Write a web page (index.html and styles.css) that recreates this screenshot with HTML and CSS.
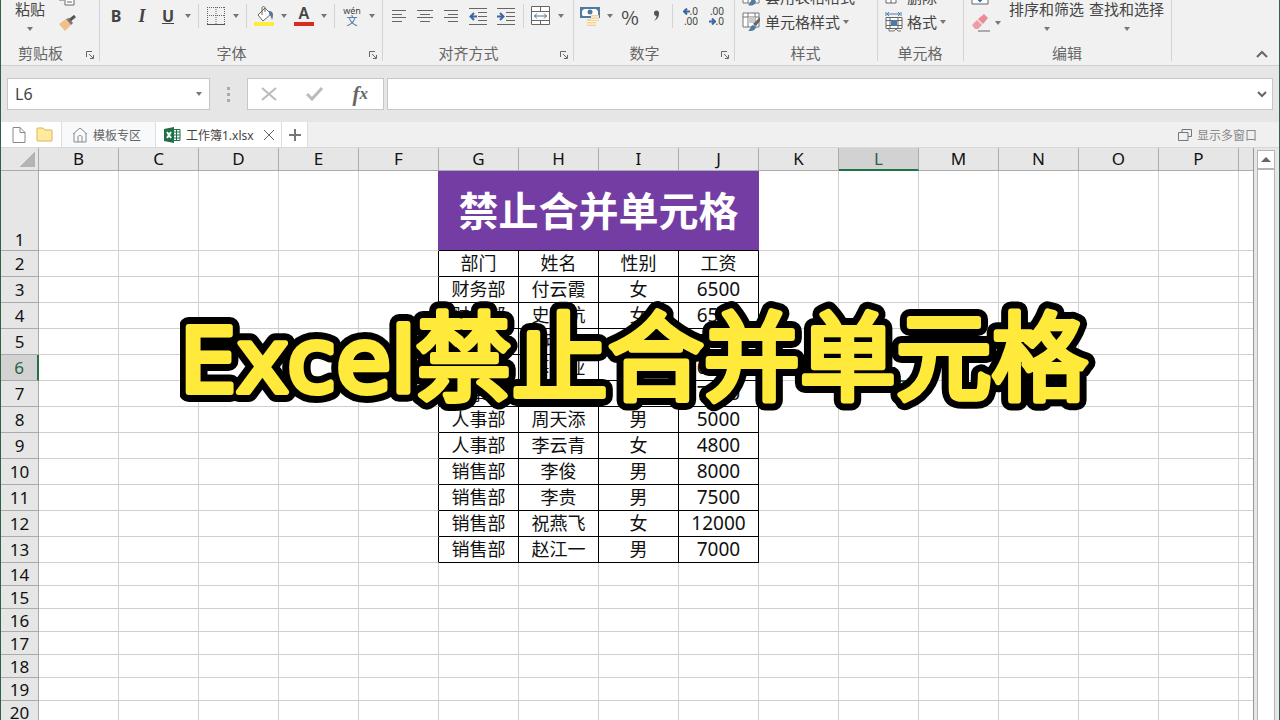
FILE: index.html
```
<!DOCTYPE html>
<html lang="zh-CN">
<head>
    <meta charset="UTF-8">
    <meta name="viewport" content="width=device-width, initial-scale=1.0">
    <title>工作簿1.xlsx</title>
    <link rel="stylesheet" href="styles.css">
</head>
<body>
<div class="window">

    <!-- 功能区 -->
    <header class="ribbon">
        <section class="group clipboard">
            <div class="group-body">
                <button class="stack">粘贴<i class="caret"></i></button>
                <div class="column">
                    <button class="small" aria-label="复制"><svg width="18" height="16" viewBox="0 0 18 16"><path d="M1 1v9h5M7 4h5l4 4v7H7zM9 9h5M9 12h5" fill="#fff" stroke="#666"/></svg></button>
                    <button class="small" aria-label="格式刷"><svg width="18" height="17" viewBox="0 0 18 17"><path d="M1 9l7-5 5 6-6 6z" fill="#f0c084"/><path d="M8 4l3-1 4 5-2 2z" fill="#777"/><path d="M12 5l5-4" stroke="#555" stroke-width="3"/></svg></button>
                </div>
            </div>
            <div class="group-label">剪贴板<button class="launcher" aria-label="剪贴板设置"><svg width="8" height="8" viewBox="0 0 8 8"><path d="M.5 6V.5H6M3 3l4 4M7.500 4v3.500H4" fill="none" stroke="#666"/></svg></button></div>
        </section>

        <section class="group font">
            <div class="group-body tools">
                <button class="tool bold">B</button>
                <button class="tool italic">I</button>
                <button class="tool underline">U</button>
                <button class="drop" aria-label="下划线选项"><i class="caret"></i></button>
                <span class="sep"></span>
                <button class="tool" aria-label="边框"><svg width="18" height="18" viewBox="0 0 18 18"><path d="M.5 0v17M9 0v17M17.500 0v17M0 .5h18M0 8.500h18" stroke="#666" stroke-dasharray="1 1"/><path d="M0 17.500h18" stroke="#555"/></svg></button>
                <button class="drop" aria-label="边框选项"><i class="caret"></i></button>
                <span class="sep"></span>
                <button class="tool" aria-label="填充颜色"><svg width="22" height="20" viewBox="0 0 22 20"><path d="M5 9l7-7 6 6-8 7z" fill="#fff" stroke="#666"/><path d="M9 9V2c0-2 3-2 3 0v4" fill="none" stroke="#666"/><path d="M16 5c4 0 5 3 3 9-1-3-1-4-3-6z" fill="#5273a0"/><path d="M1 16h20v4H1z" fill="#fbed38"/></svg></button>
                <button class="drop" aria-label="填充选项"><i class="caret"></i></button>
                <button class="tool color" aria-label="字体颜色"><span>A</span></button>
                <button class="drop" aria-label="字体颜色选项"><i class="caret"></i></button>
                <span class="sep"></span>
                <button class="tool pinyin"><span>wén</span><b>文</b></button>
                <button class="drop" aria-label="拼音选项"><i class="caret"></i></button>
            </div>
            <div class="group-label">字体<button class="launcher" aria-label="字体设置"><svg width="8" height="8" viewBox="0 0 8 8"><path d="M.5 6V.5H6M3 3l4 4M7.500 4v3.500H4" fill="none" stroke="#666"/></svg></button></div>
        </section>

        <section class="group align">
            <div class="group-body tools">
                <button class="tool" aria-label="左对齐"><svg width="16" height="14" viewBox="0 0 16 14"><path d="M1 1.500h14M1 5.500h10M1 8.500h14M1 12.500h10" stroke="#666"/></svg></button>
                <button class="tool" aria-label="居中"><svg width="16" height="14" viewBox="0 0 16 14"><path d="M0 1.500h16M3 5.500h10M0 8.500h16M3 12.500h10" stroke="#666"/></svg></button>
                <button class="tool" aria-label="右对齐"><svg width="16" height="14" viewBox="0 0 16 14"><path d="M1 1.500h14M5 5.500h10M1 8.500h14M5 12.500h10" stroke="#666"/></svg></button>
                <button class="tool wide" aria-label="减少缩进"><svg width="18" height="17" viewBox="0 0 18 17"><path d="M0 .5h18M9 4.500h9M9 8.500h9M9 12.500h9M0 16.500h18" stroke="#666"/><path d="M8 8.500H1M5 5L1.500 8.500 5 12" fill="none" stroke="#3b68a0" stroke-width="2"/></svg></button>
                <button class="tool wide" aria-label="增加缩进"><svg width="18" height="17" viewBox="0 0 18 17"><path d="M0 .5h18M9 4.500h9M9 8.500h9M9 12.500h9M0 16.500h18" stroke="#666"/><path d="M0 8.500h7M3 5l3.500 3.500L3 12" fill="none" stroke="#3b68a0" stroke-width="2"/></svg></button>
                <span class="sep"></span>
                <button class="tool" aria-label="合并后居中"><svg width="20" height="20" viewBox="0 0 20 20"><path d="M.5 .5h18v18H.5zM.5 5.500h18M.5 14.500h18M9.500 1v4M9.500 15v4" fill="#fff" stroke="#666"/><path d="M3 10h13M6 7.500L3.500 10 6 12.500M13 7.500l2.500 2.500-2.500 2.500" fill="none" stroke="#4d7292"/></svg></button>
                <button class="drop" aria-label="合并选项"><i class="caret"></i></button>
            </div>
            <div class="group-label">对齐方式<button class="launcher" aria-label="对齐设置"><svg width="8" height="8" viewBox="0 0 8 8"><path d="M.5 6V.5H6M3 3l4 4M7.500 4v3.500H4" fill="none" stroke="#666"/></svg></button></div>
        </section>

        <section class="group number">
            <div class="group-body tools">
                <button class="tool" aria-label="会计数字格式"><svg width="20" height="20" viewBox="0 0 20 20"><path d="M1 2h18v9H1z" fill="#fff" stroke="#4d7ba3" stroke-width="2"/><path d="M1 2h4L1 6zM19 2v4l-4-4zM1 11V8l3 3z" fill="#4d7ba3"/><circle cx="10" cy="6" r="2.500" fill="#4d7ba3"/><path d="M11 9h8v6h-3v5H7v-7h4z" fill="#f1d29b"/><path d="M11 11h8M11 13.500h8M7 15.500h9M7 18h9" stroke="#fff8e8"/></svg></button>
                <button class="drop" aria-label="货币选项"><i class="caret"></i></button>
                <button class="tool percent">%</button>
                <button class="tool" aria-label="千位分隔"><svg width="8" height="12" viewBox="0 0 8 12"><path d="M2 3a2.500 2.500 0 0 1 5 0c0 4-1.500 6-5 8 2-2.500 2.500-3 2.500-5C3 6 2 5 2 3z" fill="#555"/></svg></button>
                <span class="sep"></span>
                <button class="tool decimal"><span><svg width="7" height="7" viewBox="0 0 7 7"><path d="M7 3.500H1M4 .5l-3 3 3 3" fill="none" stroke="#3b68a0" stroke-width="2"/></svg>.0</span><span>.00</span></button>
                <button class="tool decimal"><span>.00</span><span><svg width="7" height="7" viewBox="0 0 7 7"><path d="M0 3.500h6M3 .5l3 3-3 3" fill="none" stroke="#3b68a0" stroke-width="2"/></svg>.0</span></button>
            </div>
            <div class="group-label">数字<button class="launcher" aria-label="数字设置"><svg width="8" height="8" viewBox="0 0 8 8"><path d="M.5 6V.5H6M3 3l4 4M7.500 4v3.500H4" fill="none" stroke="#666"/></svg></button></div>
        </section>

        <section class="group styles">
            <div class="group-body list">
                <button class="row"><svg width="20" height="20" viewBox="0 0 20 20"><path d="M1 1h16v15H1zM1 5h16M6 1v15M12 1v15" fill="#fff" stroke="#777"/><path d="M6 18c3 1 7 1 8-4l-3-2c-3 1-2 4-5 6z" fill="#4d7ba3"/></svg>套用表格格式<i class="caret"></i></button>
                <button class="row"><svg width="20" height="20" viewBox="0 0 20 20"><path d="M1 1h16v14H1zM1 5h16M6 1v14M13 1v14" fill="#fff" stroke="#777"/><path d="M6 5h7v6H6z" fill="#ccc"/><path d="M18 5v4l-4 5-3-2z" fill="#666"/><path d="M6 19c4 0 7 0 8-4l-3-2c-3 1-2 4-5 6z" fill="#4d7ba3"/></svg>单元格样式<i class="caret"></i></button>
            </div>
            <div class="group-label">样式</div>
        </section>

        <section class="group cells">
            <div class="group-body list">
                <button class="row"><svg width="20" height="20" viewBox="0 0 20 20"><path d="M2 2h10v14H2zM2 7h10M2 12h10M7 2v14" fill="#fff" stroke="#666"/></svg>删除<i class="caret"></i></button>
                <button class="row"><svg width="20" height="20" viewBox="0 0 20 20"><path d="M2 0v4M17 0v4M3 2h13M5 0L3 2l2 2M14 0l2 2-2 2" fill="none" stroke="#4d7ba3"/><path d="M2 5.500h16v11H2zM2 8.500h16M2 13.500h16M6 5v11M14 5v11" fill="#fff" stroke="#666"/><path d="M7 8h6v6H7z" fill="#4d7ba3"/><path d="M5 17v2h5l2-2M12 17l2 2h3" fill="none" stroke="#777"/></svg>格式<i class="caret"></i></button>
            </div>
            <div class="group-label">单元格</div>
        </section>

        <section class="group edit">
            <div class="group-body">
                <div class="column">
                    <button class="small" aria-label="填充"><svg width="18" height="16" viewBox="0 0 18 16"><path d="M1 1h16v14H1z" fill="#fff" stroke="#666"/><path d="M9 4v8M6 9l3 3 3-3" fill="none" stroke="#3b68a0" stroke-width="2"/></svg></button>
                    <button class="small" aria-label="清除"><svg width="20" height="18" viewBox="0 0 20 18"><path d="M7 5l6-5 4 4-5 6z" fill="#ea8c97"/><path d="M6 6l5 5-4 4H4l-3-4z" fill="#ee9ca6"/><path d="M6 5l6 6" stroke="#f7d5d9"/><path d="M7 17h12" stroke="#666"/></svg><i class="caret"></i></button>
                </div>
                <button class="stack">排序和筛选<i class="caret"></i></button>
                <button class="stack">查找和选择<i class="caret"></i></button>
            </div>
            <div class="group-label">编辑</div>
        </section>
        <button class="collapse" aria-label="折叠功能区"><svg width="12" height="8" viewBox="0 0 12 8"><path d="M1 7l5-5 5 5" fill="none" stroke="#666" stroke-width="2"/></svg></button>
    </header>

    <!-- 编辑栏 -->
    <div class="formula-bar">
        <div class="name-box"><input type="text" value="L6" aria-label="名称框"><button aria-label="名称列表"><i class="caret"></i></button></div>
        <span class="dots"><i></i><i></i><i></i></span>
        <div class="fx-box">
            <button aria-label="取消"><svg width="16" height="14" viewBox="0 0 16 14"><path d="M1 1l14 12M15 1L1 13" stroke="#bbb" stroke-width="2"/></svg></button>
            <button aria-label="输入"><svg width="18" height="14" viewBox="0 0 18 14"><path d="M1 7l5 5L16 1" fill="none" stroke="#bbb" stroke-width="3"/></svg></button>
            <button class="fx" aria-label="插入函数">f<small>x</small></button>
        </div>
        <div class="formula"><input type="text" aria-label="编辑栏"><button aria-label="展开编辑栏"><svg width="10" height="7" viewBox="0 0 10 7"><path d="M1 1l4 4 4-4" fill="none" stroke="#666" stroke-width="2"/></svg></button></div>
    </div>

    <!-- 工作簿标签 -->
    <nav class="tabs">
        <div class="tab files">
            <button aria-label="新建"><svg width="14" height="16" viewBox="0 0 14 16"><path d="M1 .5h7l5 5v10H1zM8 .5v5h5" fill="#fff" stroke="#888"/></svg></button>
            <button aria-label="打开"><svg width="17" height="15" viewBox="0 0 17 15"><path d="M1 2c0-1 0-1 1-1h5l2 2h6c1 0 1 0 1 1v9c0 1 0 1-1 1H2c-1 0-1 0-1-1z" fill="#ffeaa0" stroke="#d8b455"/></svg></button>
        </div>
        <a class="tab home" href="#"><svg width="16" height="16" viewBox="0 0 16 16"><path d="M1 7l7-6 7 6M2 6v9h12V6M6 15v-5c0-2 4-2 4 0v5" fill="none" stroke="#888"/></svg>模板专区</a>
        <div class="tab active">
            <svg width="17" height="16" viewBox="0 0 17 16"><path d="M9 2.500h7v11H9zM9 5h7M9 8h7M9 11h7M12.500 2v12" fill="#fff" stroke="#1e7145"/><path d="M0 2l10-2v16L0 14z" fill="#1e7145"/><path d="M3 5l4 6M7 5l-4 6" stroke="#fff" stroke-width="2"/></svg>
            <a href="#">工作簿1.xlsx</a>
            <button aria-label="关闭"><svg width="12" height="12" viewBox="0 0 12 12"><path d="M1 1l10 10M11 1L1 11" stroke="#666"/></svg></button>
        </div>
        <button class="tab add" aria-label="新建标签"><svg width="12" height="12" viewBox="0 0 12 12"><path d="M6 0v12M0 6h12" stroke="#777" stroke-width="2"/></svg></button>
        <button class="multi"><svg width="14" height="12" viewBox="0 0 14 12"><path d="M4 3V.5h9.500v7H10M.5 3.500H10v8H.5z" fill="none" stroke="#777"/></svg>显示多窗口</button>
    </nav>

    <!-- 工作表 -->
    <main class="sheet">
        <div class="grid">
            <table id="cells">
                <thead></thead>
                <tbody></tbody>
            </table>
        </div>
        <div class="scrollbar">
            <button aria-label="向上滚动"><i class="up"></i></button>
            <div class="thumb"></div>
        </div>
    </main>

    <div class="caption">
        <svg width="920" height="120" viewBox="0 0 920 120" role="img" aria-label="Excel禁止合并单元格">
            <defs>
                <text id="title" x="0" y="92"><tspan class="latin">Excel</tspan><tspan class="han">禁止合并单元格</tspan></text>
            </defs>
            <use href="#title" class="outline"/>
            <use href="#title" class="face"/>
        </svg>
    </div>
</div>

<script>
    const columns = ['B', 'C', 'D', 'E', 'F', 'G', 'H', 'I', 'J', 'K', 'L', 'M', 'N', 'O', 'P', ''];
    // 第 2 行开始的数据
    const data = [
        ['部门', '姓名', '性别', '工资'],
        ['财务部', '付云霞', '女', '6500'],
        ['财务部', '史文杭', '女', '6500'],
        ['财务部', '何一', '女', '7000'],
        ['人事部', '慕容业', '男', '6000'],
        ['人事部', '王一', '男', '7000'],
        ['人事部', '周天添', '男', '5000'],
        ['人事部', '李云青', '女', '4800'],
        ['销售部', '李俊', '男', '8000'],
        ['销售部', '李贵', '男', '7500'],
        ['销售部', '祝燕飞', '女', '12000'],
        ['销售部', '赵江一', '男', '7000']
    ];
    const first = columns.indexOf('G');

    let head = '<tr><th class="corner"></th>';
    columns.forEach(c => {
        head += `<th class="${c === 'L' ? 'current' : ''}">${c}</th>`;
    });
    document.querySelector('#cells thead').innerHTML = head + '</tr>';

    let body = '';
    for (let r = 1; r <= 20; r++) {
        const values = data[r - 2];
        const type = r === 1 ? 'title-row' : values ? 'data-row' : '';
        body += `<tr class="${type}"><th class="${r === 6 ? 'current' : ''}">${r}</th>`;
        for (let c = 0; c < columns.length; c++) {
            if (r === 1 && c === first) {
                body += '<td class="title" colspan="4">禁止合并单元格</td>';
                c += 3;
            } else if (values && c >= first && c < first + 4) {
                body += `<td class="value">${values[c - first]}</td>`;
            } else {
                const edge = c === first - 1 ? 'edge' : '';
                const selected = r === 6 && columns[c] === 'L' ? 'selected' : '';
                body += `<td class="${edge}${selected}"></td>`;
            }
        }
        body += '</tr>';
    }
    document.querySelector('#cells tbody').innerHTML = body;
</script>
</body>
</html>
```
FILE: styles.css
```
* {
    box-sizing: border-box;
}
body {
    margin: 0;
    font-family: "Noto Sans", "Noto Sans CJK SC", sans-serif;
    color: #444;
    overflow: hidden;
}
button, input {
    font: inherit;
    color: inherit;
    background: none;
    border: 0;
    padding: 0;
    margin: 0;
}
button {
    display: flex;
    align-items: center;
    justify-content: center;
    white-space: nowrap;
}
input {
    outline: none;
    min-width: 0;
}
a {
    color: inherit;
    text-decoration: none;
}
svg {
    flex: none;
    display: block;
}
.window {
    position: relative;
    height: 100vh;
    display: flex;
    flex-direction: column;
    background: #e6e6e6;
    border-left: 1px solid #2d6149;
    border-right: 1px solid #2d6149;
}
/* 向下的小三角 */
.caret {
    flex: none;
    border: 3px solid transparent;
    border-top: 4px solid #777;
    border-bottom: 0;
}

/* 功能区 */
.ribbon {
    flex: none;
    display: flex;
    height: 66px;
    background: #f1f1f1;
    border-bottom: 1px solid #cfcfcf;
    font-family: "Noto Sans CJK SC", sans-serif;
    font-size: 15px;
    overflow: hidden;
}
.group {
    position: relative;
    display: flex;
    flex-direction: column;
}
.group::after {
    content: "";
    position: absolute;
    right: 0;
    top: 0;
    bottom: 4px;
    border-right: 1px solid #d4d4d4;
}
.clipboard { width: 99px; }
.font { width: 283px; }
.align { width: 191px; }
.number { width: 161px; }
.styles { width: 143px; }
.cells { width: 86px; }
.edit { width: 208px; }
.group-body {
    height: 43px;
    display: flex;
}
.tools {
    height: 32px;
    margin-bottom: 11px;
    align-items: center;
    padding-left: 3px;
}
.group-label {
    position: relative;
    height: 20px;
    line-height: 20px;
    text-align: center;
    color: #666;
    padding-right: 20px;
}
.styles .group-label,
.cells .group-label,
.edit .group-label {
    padding-right: 2px;
}
.launcher {
    position: absolute;
    right: 6px;
    top: 8px;
}
.tool {
    width: 26px;
    height: 26px;
    font-size: 16px;
}
.wide { width: 28px; }
.drop {
    width: 14px;
    height: 26px;
}
.sep {
    width: 1px;
    height: 24px;
    margin: 0 4px 0 3px;
    background: #d4d4d4;
}
.bold, .italic, .underline, .color {
    font-family: "Noto Sans", sans-serif;
    font-weight: bold;
}
.italic {
    font-family: "Liberation Serif", serif;
    font-style: italic;
    font-size: 18px;
}
.underline { text-decoration: underline; }
.color span {
    width: 20px;
    height: 20px;
    line-height: 15px;
    font-weight: 600;
    border-bottom: 4px solid #d92b1f;
}
.pinyin {
    flex-direction: column;
    font-family: "Noto Sans", "Noto Sans CJK SC", sans-serif;
    font-size: 9px;
    line-height: 9px;
}
.pinyin b {
    font-size: 11px;
    line-height: 12px;
    font-weight: normal;
    color: #3b68a0;
}
.percent { font-size: 19px; }
.decimal {
    flex-direction: column;
    align-items: flex-end;
    padding-right: 5px;
    font-family: "Noto Sans", sans-serif;
    font-size: 10px;
    line-height: 10px;
}
.decimal span {
    display: flex;
    align-items: center;
}
.list {
    flex-direction: column;
    justify-content: flex-end;
    align-items: flex-start;
    padding: 0 0 9px 7px;
}
.row {
    flex: none;
    height: 25px;
    gap: 3px;
}
.cells .list { padding-left: 6px; }
.stack {
    flex-direction: column;
    justify-content: flex-start;
    height: 32px;
    line-height: 18px;
    gap: 9px;
}
.clipboard .group-body {
    padding-left: 14px;
    gap: 13px;
}
.edit .group-body {
    padding-left: 7px;
    gap: 5px;
}
.column {
    display: flex;
    flex-direction: column;
    justify-content: flex-end;
    align-items: flex-start;
    gap: 9px;
    padding-bottom: 11px;
}
.edit .column {
    width: 33px;
}
.small {
    flex: none;
    gap: 4px;
}
.collapse {
    width: 20px;
    height: 20px;
    margin: auto 7px 1px auto;
}

/* 编辑栏 */
.formula-bar {
    flex: none;
    display: flex;
    height: 56px;
    padding: 12px 6px;
}
.name-box, .fx-box, .formula {
    display: flex;
    align-items: center;
    background: #fff;
    border: 1px solid #c6c6c6;
}
.name-box {
    width: 203px;
    padding: 0 7px;
    font-size: 16px;
}
.name-box input, .formula input {
    flex: 1;
}
.dots {
    display: flex;
    flex-direction: column;
    justify-content: center;
    gap: 3px;
    width: 37px;
    padding-left: 17px;
}
.dots i {
    width: 3px;
    height: 3px;
    background: #aaa;
}
.fx-box {
    width: 137px;
    justify-content: space-between;
    padding: 0 15px 0 13px;
}
.fx {
    font-family: "Liberation Serif", serif;
    font-style: italic;
    font-weight: bold;
    font-size: 21px;
    line-height: 24px;
    color: #666;
}
.fx small { font-size: 17px; }
.formula {
    flex: 1;
    margin-left: 3px;
    padding: 0 5px;
}

/* 工作簿标签 */
.tabs {
    flex: none;
    display: flex;
    height: 26px;
    background: #f0f0f0;
    border-bottom: 1px solid #d8d8d8;
    font-size: 12px;
    color: #666;
}
.tab {
    display: flex;
    align-items: center;
    background: #fff;
    border-right: 1px solid #ddd;
}
.files {
    width: 61px;
    padding-left: 11px;
    gap: 10px;
}
.home {
    width: 94px;
    padding-left: 10px;
    gap: 5px;
    background: #f8f9fb;
}
.active {
    width: 126px;
    padding-left: 8px;
    gap: 5px;
    color: #444;
}
.active button { margin-left: 4px; }
.add { width: 26px; }
.multi {
    margin: 0 22px 0 auto;
    gap: 5px;
    color: #888;
}

/* 工作表 */
.sheet {
    flex: 1;
    min-height: 0;
    display: flex;
    overflow: hidden;
}
.grid {
    flex: 1;
    overflow: hidden;
    border-right: 1px solid #999;
    background: #fff;
}
table {
    width: 100%;
    table-layout: fixed;
    border-spacing: 0;
}
th, td {
    width: 80px;
    height: 23px;
    padding: 0;
    border: 0 solid #d0d0d0;
    border-width: 0 1px 1px 0;
    text-align: center;
    line-height: 20px;
    color: #111;
    white-space: nowrap;
}
th {
    background: #e6e6e6;
    border-color: #ababab;
    font-size: 17px;
    font-weight: normal;
}
th:first-child { width: 38px; }
th:last-child, td:last-child {
    width: auto;
    border-right: 0;
}
tbody th {
    vertical-align: bottom;
}
.corner {
    background: linear-gradient(135deg, #e6e6e6 50%, #b4b4b4 50%) right 3px bottom 3px / 15px 15px no-repeat #e6e6e6;
}
thead .current {
    background: #d2d2d2;
    color: #2d6149;
    border-bottom: 2px solid #217346;
}
tbody .current {
    background: #d2d2d2;
    color: #2d6149;
    border-right: 2px solid #217346;
}
.title-row th, .title-row td { height: 80px; }
.data-row th, .data-row td { height: 26px; }
.data-row th {
    line-height: 23px;
    padding-bottom: 1px;
}
td.title {
    background: #743da3;
    border-color: #743da3;
    border-bottom-color: #000;
    color: #fff;
    font-size: 40px;
    font-weight: bold;
}
.title-row .edge { border-right-color: #743da3; }
.data-row .edge { border-right-color: #000; }
td.value {
    border-color: #000;
    font-size: 18px;
    padding-bottom: 2px;
}
.data-row:not(:nth-child(2)) .value:nth-child(10) { font-size: 19px; }
.selected {
    outline: 2px solid #217346;
    outline-offset: -1px;
}
.scrollbar {
    flex: none;
    width: 25px;
    padding: 2px 3px 0 3px;
}
.scrollbar button, .thumb {
    width: 18px;
    background: #fff;
    border: 1px solid #b5b5b5;
}
.scrollbar button { height: 19px; }
.up {
    border: 5px solid transparent;
    border-top: 0;
    border-bottom: 5px solid #666;
}
.thumb { height: 100%; }

/* 画面中央的大标题 */
.caption {
    position: absolute;
    inset: 0;
    display: flex;
    align-items: center;
    justify-content: center;
    pointer-events: none;
}
.latin {
    font-family: "DejaVu Sans", sans-serif;
    font-size: 89px;
}
.han {
    font-family: "Noto Sans CJK SC", sans-serif;
    font-size: 96px;
}
.outline, .face {
    stroke-linejoin: round;
    stroke-linecap: round;
}
.outline {
    fill: #000;
    stroke: #000;
    stroke-width: 20px;
}
.face {
    fill: #ffe93b;
    stroke: #ffe93b;
    stroke-width: 6px;
}
```
